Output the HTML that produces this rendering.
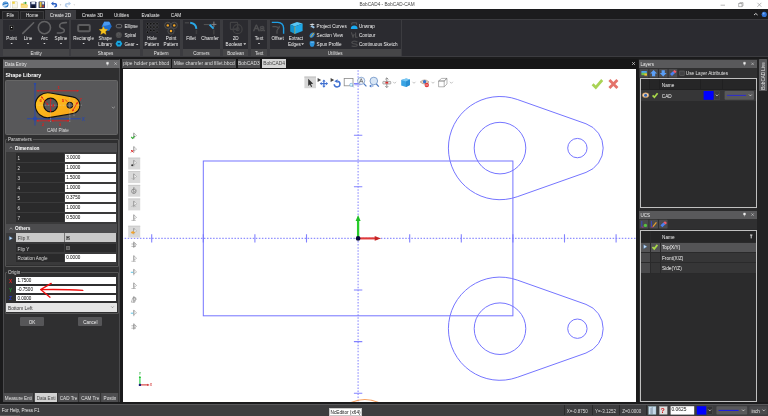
<!DOCTYPE html>
<html>
<head>
<meta charset="utf-8">
<title>BobCAD4 - BobCAD-CAM</title>
<style>
*{box-sizing:border-box;margin:0;padding:0}
html,body{width:768px;height:416px;overflow:hidden;background:#1b1b1c}
body{position:relative;font-family:"Liberation Sans",sans-serif;font-size:4.6px;color:#d6d6d6;line-height:1}
.a{position:absolute}
.t{position:absolute;white-space:nowrap;line-height:6px;height:6px;margin-top:1px}
.c{text-align:center}
svg{position:absolute;overflow:visible}
/* ribbon */
#titlebar{left:0;top:0;width:768px;height:9.3px;background:#fff}
#tabrow{left:0;top:9.3px;width:768px;height:10.3px;background:#1c1c1e}
#ribbon{left:0;top:19.4px;width:768px;height:37.4px;background:#3c3c40}
.grp{position:absolute;top:20.2px;height:35.8px;background:#2b2b30}
.grp i{position:absolute;left:0;right:0;bottom:0;height:7.2px;background:#464648;display:block}
.gl{position:absolute;top:50.6px;height:6px;line-height:6px;text-align:center;color:#e2e2e2}
.rt{position:absolute;white-space:nowrap;line-height:6px;height:6px;margin-top:1px;color:#f0f0f0;text-align:center}
.arr{position:absolute;width:3px;height:1.8px;margin-left:-.4px;margin-top:.2px;background:#dadada;clip-path:polygon(0 0,100% 0,50% 100%)}
/* panels */
.hdr{position:absolute;background:#6a6a6c;color:#e4e4e4}
.inp{position:absolute;background:#fff;color:#000;height:8px;line-height:8px;padding-left:1.2px;font-size:4.6px}
.lab{position:absolute;background:#2a2a2b;color:#ddd;height:8.6px;line-height:11.6px;overflow:hidden;padding-left:1.2px}
</style>
</head>
<body>
<div id="root" style="position:absolute;left:0;top:0;width:768px;height:416px;will-change:transform">
<!-- TITLE BAR -->
<div class="a" id="titlebar"></div>
<div class="t" style="left:359.4px;top:.6px;color:#444;font-size:4.7px">BobCAD4 - BobCAD-CAM</div>
<svg class="a" style="left:0;top:0" width="90" height="10" viewBox="0 0 90 10">
<circle cx="5.5" cy="4.6" r="3" fill="#2b79c8"/><path d="M2.8 5.4 Q5 3.2 8.2 4.2 Q6.6 6.6 3.4 7 Z" fill="#cfe3f4"/><path d="M3 3.4 Q5 1.8 7.4 2.6" stroke="#9cc6ea" stroke-width=".6" fill="none"/>
<rect x="10.3" y="1.4" width=".4" height="6.6" fill="#c8c8c8"/><rect x="12.4" y="1.8" width="5" height="6.2" fill="#f6f5ea" stroke="#c4c0a0" stroke-width=".4"/><rect x="12.2" y="1.6" width="2.6" height="2.2" fill="#f2d444"/>
<path d="M20.8 3.4 h2.4 l.7 .8 h3.4 v3.6 h-6.5 z" fill="#f0c64a"/><path d="M21.4 5 h6.8 l-1 2.8 h-6.4 z" fill="#f7dd82"/><path d="M25 1.4 l2 1.5 -2 1.4 v-.9 h-1.6 v-1 h1.6z" fill="#42a53a"/>
<rect x="30.2" y="1.8" width="6.2" height="6.2" rx=".5" fill="#1e2a52"/><rect x="31.4" y="1.8" width="3.8" height="2.4" fill="#dfe6f2"/><rect x="31.6" y="5.4" width="3.4" height="2.6" fill="#0e1326"/>
<rect x="38.6" y="1.6" width="6.4" height="6.4" rx=".5" fill="#27376a"/><rect x="39.6" y="2" width="2" height="5.4" fill="#e5c340"/><rect x="42.2" y="2" width="2" height="2.4" fill="#dfe6f2"/><rect x="42.2" y="5.2" width="2" height="2.2" fill="#b5452f"/>
<rect x="47.4" y="1.4" width=".4" height="6.6" fill="#c8c8c8"/>
<path d="M51 3.6 L53.4 1.6 V3 H55.4 Q57.4 3.2 57.2 5.4 Q57 7.6 54.4 7.4 V6 Q55.6 6 55.6 5 Q55.6 4.4 55 4.4 H53.4 V5.8 Z" fill="#2d62c4"/>
<path d="M59.6 4.4 h1.8 l-.9 1 z" fill="#9a9a9a"/>
<path d="M71 3.6 L68.6 1.6 V3 H66.6 Q64.6 3.2 64.8 5.4 Q65 7.6 67.6 7.4 V6 Q66.4 6 66.4 5 Q66.4 4.4 67 4.4 H68.6 V5.8 Z" fill="#b4cdea"/>
<path d="M73.4 4.4 h1.8 l-.9 1 z" fill="#c4c4c4"/>
</svg>
<svg class="a" style="left:715px;top:0" width="53" height="10" viewBox="0 0 53 10">
<path d="M5.6 5.2 h4.4" stroke="#8a8a8a" stroke-width=".6"/>
<rect x="23.8" y="3.4" width="3.2" height="3.4" fill="none" stroke="#8a8a8a" stroke-width=".6"/><path d="M24.8 3.4 v-.8 h3.2 v3.4 h-1" fill="none" stroke="#8a8a8a" stroke-width=".6"/>
<path d="M42.4 2.8 l4 4 M46.4 2.8 l-4 4" stroke="#8a8a8a" stroke-width=".6"/>
</svg>
<!-- TAB ROW -->
<div class="a" id="tabrow"></div>
<div class="a" style="left:1.6px;top:10.6px;width:17.6px;height:8.8px;background:#262628;border:.4px solid #3a3a3c;border-bottom:0"></div>
<div class="a" style="left:20px;top:10.6px;width:24.4px;height:8.8px;background:#262628;border:.4px solid #3a3a3c;border-bottom:0"></div>
<div class="a" style="left:45.2px;top:10.2px;width:30.4px;height:9.6px;background:#3c3c40"></div>
<div class="rt" style="left:1.6px;width:17.6px;top:12px;font-size:4.7px">File</div>
<div class="rt" style="left:20px;width:24.4px;top:12px;font-size:4.7px">Home</div>
<div class="rt" style="left:45.2px;width:30.4px;top:12px;font-size:4.7px">Create 2D</div>
<div class="rt" style="left:77px;width:31px;top:12px;font-size:4.7px">Create 3D</div>
<div class="rt" style="left:108px;width:27px;top:12px;font-size:4.7px">Utilities</div>
<div class="rt" style="left:137px;width:27px;top:12px;font-size:4.7px">Evaluate</div>
<div class="rt" style="left:166px;width:20px;top:12px;font-size:4.7px">CAM</div>
<svg class="a" style="left:748px;top:10px" width="20" height="9" viewBox="0 0 20 9"><path d="M6 5 l1.8 -1.5 1.8 1.5" fill="none" stroke="#e4e4e4" stroke-width=".9"/><circle cx="16.2" cy="4.4" r="2.6" fill="#2f73d8"/><circle cx="15.6" cy="3.6" r="1" fill="#7fb0f0"/></svg>
<!-- RIBBON -->
<div class="a" id="ribbon"></div>
<div class="grp" style="left:3px;width:66.3px"><i></i></div><div class="gl" style="left:3px;width:66.3px">Entity</div>
<div class="grp" style="left:71.4px;width:68.4px"><i></i></div><div class="gl" style="left:71.4px;width:68.4px">Shapes</div>
<div class="grp" style="left:142.6px;width:37.2px"><i></i></div><div class="gl" style="left:142.6px;width:37.2px">Pattern</div>
<div class="grp" style="left:182.6px;width:37.6px"><i></i></div><div class="gl" style="left:182.6px;width:37.6px">Corners</div>
<div class="grp" style="left:223px;width:25.3px"><i></i></div><div class="gl" style="left:223px;width:25.3px">Boolean</div>
<div class="grp" style="left:250.8px;width:16.6px"><i></i></div><div class="gl" style="left:250.8px;width:16.6px">Text</div>
<div class="grp" style="left:269.6px;width:131.2px"><i></i></div><div class="gl" style="left:269.6px;width:131.2px">Utilities</div>
<div class="grp" style="left:402.4px;width:366px"></div>
<div class="rt" style="left:-8.4px;width:40px;top:35.2px">Point</div>
<div class="arr" style="left:10.5px;top:42.4px"></div>
<div class="rt" style="left:8.0px;width:40px;top:35.2px">Line</div>
<div class="arr" style="left:26.9px;top:42.4px"></div>
<div class="rt" style="left:24.4px;width:40px;top:35.2px">Arc</div>
<div class="arr" style="left:43.3px;top:42.4px"></div>
<div class="rt" style="left:41.0px;width:40px;top:35.2px">Spline</div>
<div class="arr" style="left:59.9px;top:42.4px"></div>
<svg class="a" style="left:0;top:19px" width="410" height="38" viewBox="0 19 410 38">
<g fill="none" stroke="#626264" stroke-width="1.6" stroke-linecap="round">
<rect x="9.6" y="25.4" width="4" height="4.6" rx=".4" fill="#0c0c0c" stroke="#4a4a4c" stroke-width=".7"/>
<path d="M22.8 33.4 L33.6 22.8"/>
<circle cx="44.4" cy="27.6" r="6.1"/>
<path d="M66.4 22.6 Q59.4 22.4 59.6 26 Q59.8 28 62.4 28.6 Q65 29.4 64 31.6 Q63 33.2 57.4 33"/>
<rect x="78.2" y="24.9" width="11.6" height="6.4" rx="1" stroke-width="2" stroke="#5c5c5e" fill="#262628"/>
</g>
<circle cx="11.6" cy="27.4" r=".7" fill="#e8e8e8"/>
<!-- shape library -->
<path d="M104.2 21.8 h5 l2.6 4.4 -2.6 4.6 h-5 l-2.6 -4.6z" fill="#1e6fd0"/><path d="M104.2 21.8 h5 l1.4 2.4 q-4 2 -8 1.2z" fill="#4b9af0"/>
<path d="M103.4 26.4 l1.3 2.7 3 .4 -2.2 2.1 .6 3 -2.7 -1.5 -2.7 1.5 .6 -3 -2.2 -2.1 3 -.4z" fill="#f5c21c" stroke="#d89a10" stroke-width=".3"/>
<!-- ellipse spiral gear -->
<rect x="116.2" y="24.4" width="5.6" height="3.4" rx="1.6" fill="none" stroke="#747476" stroke-width=".9"/>
<circle cx="118.8" cy="35" r="3.1" fill="#4c4c4e"/><path d="M118.8 35 q1.4 -.2 1 -1.4 q-.8 -1.2 -2.2 -.2 q-1 1.6 .6 2.8" fill="none" stroke="#666" stroke-width=".5"/>
<path d="M117.2 40.8 h3.4 l1.7 2.9 -1.7 2.9 h-3.4 l-1.7 -2.9z" fill="#17a6e0"/><rect x="117.6" y="43" width="2.6" height="1.5" rx=".7" fill="#0b3f68"/>
<!-- hole pattern -->
<g fill="#060606" stroke="#555557" stroke-width=".6"><circle cx="147.5" cy="23.8" r="1.2"/><circle cx="147.5" cy="27.1" r="1.2"/><circle cx="150.8" cy="23.8" r="1.2"/><circle cx="150.8" cy="27.1" r="1.2"/><circle cx="153.9" cy="23.8" r="1.2"/><circle cx="153.9" cy="27.1" r="1.2"/><circle cx="157.1" cy="23.8" r="1.2"/><circle cx="157.1" cy="27.1" r="1.2"/><circle cx="147.5" cy="32.2" r="1.2"/><circle cx="150.8" cy="30.3" r="1.2"/><circle cx="153.9" cy="30.3" r="1.2"/><circle cx="157.1" cy="32.2" r="1.2"/></g>
<!-- point pattern -->
<g fill="#2c2c2e" stroke="#555557" stroke-width=".8"><circle cx="167.8" cy="25.4" r="3.2"/><circle cx="174.2" cy="25.4" r="3.2"/><circle cx="171" cy="31" r="3.2"/></g>
<g fill="#f5a623"><circle cx="167.8" cy="25.4" r="1.2"/><circle cx="174.2" cy="25.4" r="1.2"/><circle cx="171" cy="31" r="1.2"/></g>
<!-- fillet -->
<path d="M184.8 22.8 h4.2" stroke="#48484a" stroke-width="1.3" fill="none"/><path d="M190.2 22.8 Q195.8 23.4 196.4 28.8" stroke="#2aa8e6" stroke-width="1.9" fill="none" stroke-linecap="butt"/><path d="M196.4 29.8 v4.2" stroke="#3e3e40" stroke-width="1.5" fill="none"/>
<!-- chamfer -->
<path d="M203.8 24.6 h6" stroke="#555557" stroke-width="1" fill="none"/><path d="M213.8 29.4 v5" stroke="#404042" stroke-width="1.5" fill="none"/><path d="M209.6 24.6 l4 4" stroke="#2aa8e6" stroke-width="2" fill="none" stroke-linecap="butt"/><path d="M213.9 21.6 v5.4 M211.4 24.4 h5" stroke="#8a8a8c" stroke-width=".9"/>
<!-- 2d boolean -->
<g fill="none" stroke="#424244" stroke-width="1.2"><rect x="230.4" y="22.4" width="7.2" height="7" rx=".6"/><circle cx="237.6" cy="29.2" r="4.5"/><circle cx="237.6" cy="29.2" r="1.5"/><path d="M237.6 24.8 v4.4 h-4.4"/></g>
<!-- text Aa -->
<text x="253.2" y="31.4" font-family="Liberation Sans" font-size="9.4" fill="none" stroke="#4e4e50" stroke-width=".7">Aa</text>
<!-- offset -->
<path d="M271.8 22.4 h6 Q283.4 22.8 283.6 28 v5.8" fill="none" stroke="#1f9fe4" stroke-width="1.4"/>
<path d="M272.4 26.6 h3.4 q1.8 .2 2.6 1.6 M277 33.8 v-3 q.2 -1.6 1.6 -2.4 q1 -.8 .6 -2.6" fill="none" stroke="#505052" stroke-width="1.2"/>
<!-- extract edges cube -->
<path d="M290.2 24.6 L297 22 L302.6 23.6 L294.8 26.4 Z" fill="#58c6f4"/><path d="M290.2 24.6 L294.8 26.4 V34 L290.2 31.4 Z" fill="#1193cf"/><path d="M294.8 26.4 L302.6 23.6 V31 L294.8 34 Z" fill="#1ea8e8"/><path d="M294.8 26.4 V34" stroke="#e9b62c" stroke-width=".6"/>
<!-- small util icons -->
<path d="M309.4 24.4 l3.2 -1 2.2 1.2 -3 1z" fill="#d8d8d8"/><path d="M310.2 26.6 l3.6 2 1 -1.6 -2.6 -1.8z" fill="#9ac4e6"/><path d="M309.2 25.4 l2 3.2" stroke="#444" stroke-width=".5"/>
<path d="M309.6 36.8 q-.6 -3.2 2.8 -4.4 q2.4 0 2.4 2.2 q-1 3 -3.8 3.4z" fill="#2b86d4"/><path d="M310.6 37.2 l3.4 -4.6" stroke="#e4b52a" stroke-width=".9"/>
<path d="M309.8 41.6 q2.4 -1.2 4.8 0 q.6 3 -1 4.8 q-1.6 .8 -3.2 -.2 q-1.2 -2 -.6 -4.6z" fill="#2b93dc"/><path d="M310.6 42 q1.6 .8 3.4 0" stroke="#bfe0f6" stroke-width=".5" fill="none"/>
<path d="M350.8 28.9 Q351 25.6 354.2 25.6 Q357.4 25.6 357.6 28.9 Z" fill="#19a9f0"/><path d="M351.8 24.8 v-2 h4.8 v2" fill="none" stroke="#5a5a5c" stroke-width=".9"/>
<path d="M351.4 32.4 l1.6 4.8 1.2 -3.2 M355.6 32.4 v4.8 h2" stroke="#505052" stroke-width="1.1" fill="none"/>
<path d="M357.4 41.8 q-4.4 -1.6 -5.6 .6 q.2 1.4 2.8 1.4 q2.8 .2 2.6 1.8 q-1.6 1.6 -5.6 .2" stroke="#4a4a4c" stroke-width="1.3" fill="none"/>
</svg>
<div class="rt" style="left:63.6px;width:40px;top:35.2px">Rectangle</div>
<div class="arr" style="left:82.5px;top:42.4px"></div>
<div class="rt" style="left:85.2px;width:40px;top:35.2px">Shape</div>
<div class="rt" style="left:85.2px;width:40px;top:40.6px">Library</div>
<div class="rt" style="left:124.4px;top:23.4px;text-align:left">Ellipse</div>
<div class="rt" style="left:124.4px;top:32.2px;text-align:left">Spiral</div>
<div class="rt" style="left:124.4px;top:41px;text-align:left">Gear</div>
<div class="arr" style="left:136.1px;top:43.4px"></div>
<div class="rt" style="left:132.0px;width:40px;top:35.2px">Hole</div>
<div class="rt" style="left:132.0px;width:40px;top:40.6px">Pattern</div>
<div class="rt" style="left:151.0px;width:40px;top:35.2px">Point</div>
<div class="rt" style="left:151.0px;width:40px;top:40.6px">Pattern</div>
<div class="rt" style="left:171.0px;width:40px;top:35.2px">Fillet</div>
<div class="rt" style="left:190.0px;width:40px;top:35.2px">Chamfer</div>
<div class="rt" style="left:215.6px;width:40px;top:35.2px">2D</div>
<div class="rt" style="left:214.0px;width:40px;top:40.6px">Boolean</div>
<div class="arr" style="left:243.7px;top:43px"></div>
<div class="rt" style="left:239.0px;width:40px;top:35.2px">Text</div>
<div class="arr" style="left:257.9px;top:42.4px"></div>
<div class="rt" style="left:257.6px;width:40px;top:35.2px">Offset</div>
<div class="rt" style="left:276.0px;width:40px;top:35.2px">Extract</div>
<div class="rt" style="left:274.4px;width:40px;top:40.6px">Edges</div>
<div class="arr" style="left:301.5px;top:43px"></div>
<div class="rt" style="left:316.6px;top:23.4px;text-align:left">Project Curves</div>
<div class="rt" style="left:316.6px;top:32.2px;text-align:left">Section View</div>
<div class="rt" style="left:316.6px;top:41px;text-align:left">Spun Profile</div>
<div class="rt" style="left:359px;top:23.4px;text-align:left">Unwrap</div>
<div class="rt" style="left:359px;top:32.2px;text-align:left">Contour</div>
<div class="rt" style="left:359px;top:41px;text-align:left">Continuous Sketch</div>

<!-- LEFT PANEL -->
<div class="a" style="left:2.6px;top:59.4px;width:117.4px;height:342.8px;background:#2f2f30;border-left:.6px solid #4a4a4c;border-right:.6px solid #4a4a4c"></div>
<div class="hdr" style="left:3px;top:59.6px;width:116.6px;height:8.4px"></div>
<div class="t" style="left:4.8px;top:61px;color:#e6e6e6;font-size:4.6px">Data Entry</div>
<svg class="a" style="left:104px;top:60px" width="16" height="8" viewBox="0 0 16 8"><path d="M2.6 2.2 h1.8 v2 h-1.8z M3.5 4.2 v1.4" fill="#eee" stroke="#eee" stroke-width=".4"/><path d="M10.4 2.4 l2.4 2.4 M12.8 2.4 l-2.4 2.4" stroke="#ddd" stroke-width=".5"/></svg>
<div class="t" style="left:5.4px;top:71px;color:#fff;font-weight:bold;font-size:5.4px">Shape Library</div>
<div class="a" style="left:5px;top:80px;width:112.6px;height:54.8px;background:#58585a;border-radius:1.4px;border:.4px solid #666"></div>
<div class="t c" style="left:5px;width:105.8px;top:127.2px;color:#dedede">CAM Plate</div>
<svg class="a" style="left:0;top:78px" width="122" height="50" viewBox="0 78 122 50">
<defs><linearGradient id="yg" x1="0" y1="0" x2="1" y2="1"><stop offset="0" stop-color="#ffc61e"/><stop offset="1" stop-color="#f7a117"/></linearGradient></defs>
<path d="M35 83.4 V125.6" stroke="#2a48a8" stroke-width="1.1"/><path d="M33.6 83 h2.8 l-1.4 2.8z" fill="#2a48a8"/>
<path d="M27 118.7 H80.6" stroke="#2a48a8" stroke-width="1.1"/><circle cx="35" cy="118.7" r="2.1" fill="#2a48a8"/>
<text x="81.8" y="120.5" font-size="4.8" font-weight="bold" fill="#2a48a8" font-family="Liberation Sans">X</text>
<path d="M50.4 93 L72.6 96.9 A8.4 8.4 0 0 1 73 113.5 L50.6 117.4 A12.5 12.5 0 1 1 50.4 93 Z" fill="url(#yg)" stroke="#111" stroke-width="1.1" stroke-linejoin="round"/>
<circle cx="50.6" cy="105" r="6.9" fill="#58585a" stroke="#111" stroke-width="1.1"/>
<circle cx="69.8" cy="105.2" r="3" fill="#58585a" stroke="#111" stroke-width="1"/>
<g stroke="#d8d8d8" stroke-width=".4" stroke-dasharray=".9 .6" fill="none"><path d="M37.6 105.2 H82"/><path d="M50.6 112 V122"/><path d="M69.8 97 V122"/><path d="M74 100 V116.6"/></g>
<g stroke="#e31b1b" stroke-width=".75" fill="none"><path d="M37.4 90.8 H78.4"/><path d="M37 120.8 H50 M52 120.8 H69"/><path d="M41.4 96.8 l6.6 8"/><path d="M72.6 111 l4.8 -8.6"/><path d="M50.6 99 v12.6"/><path d="M65.4 99.6 l1.8 2.2"/></g>
<g fill="#e31b1b"><path d="M36.4 90.8 l2.2 -1 v2z M79 90.8 l-2.2 -1 v2z M36.2 120.8 l2.2 -1 v2z M50.6 120.8 l-2.2 -1 v2z M51.2 120.8 l2.2 -1 v2z M69.6 120.8 l-2.2 -1 v2z M50.6 98.2 l-1 2.2 h2z M50.6 112.2 l-1 -2.2 h2z M41 96.2 l2.2 1 -1.5 1.3z M48.4 105.2 l-2.2 -1 1.5 -1.3z M77.8 101.8 l-.3 2.4 -1.7 -1z M72.2 111.6 l.3 -2.4 1.7 1z"/></g>
<g font-size="4.3" font-weight="bold" fill="#e31b1b" font-family="Liberation Sans"><text x="57.6" y="88.6">1</text><text x="41.8" y="125.8">2</text><text x="58.8" y="125.8">3</text><text x="52" y="106.6">4</text><text x="61.8" y="102.2">5</text><text x="39.6" y="102.2">6</text><text x="79.6" y="101.2">7</text></g>
<path d="M112 106.8 l1.4 1.4 1.4 -1.4" fill="none" stroke="#bbb" stroke-width=".7"/>
</svg>
<div class="a" style="left:4.6px;top:139.2px;width:114px;height:127.4px;border:.5px solid #555;border-radius:1px"></div>
<div class="t" style="left:7px;top:136.2px;background:#2f2f30;padding:0 1px;color:#ddd">Parameters</div>
<div class="a" style="left:6px;top:142.6px;width:111px;height:122.6px;background:#3a3a3b"></div>
<div class="a" style="left:6px;top:142.6px;width:111px;height:9.8px;background:#4c4c4e"></div>
<div class="t" style="left:15px;top:144.6px;color:#fff;font-weight:bold;font-size:4.8px">Dimension</div>
<svg class="a" style="left:8.6px;top:146px" width="4" height="3" viewBox="0 0 4 3"><path d="M.6 2.4 l1.4 -1.6 1.4 1.6" fill="none" stroke="#bbb" stroke-width=".6"/></svg>
<div class="lab" style="left:16.4px;top:153.4px;width:48px">1</div><div class="inp" style="left:65px;top:153.6px;width:51.2px">3.0000</div>
<div class="lab" style="left:16.4px;top:163.4px;width:48px">2</div><div class="inp" style="left:65px;top:163.6px;width:51.2px">1.0000</div>
<div class="lab" style="left:16.4px;top:173.4px;width:48px">3</div><div class="inp" style="left:65px;top:173.6px;width:51.2px">1.5000</div>
<div class="lab" style="left:16.4px;top:183.4px;width:48px">4</div><div class="inp" style="left:65px;top:183.6px;width:51.2px">1.0000</div>
<div class="lab" style="left:16.4px;top:193.4px;width:48px">5</div><div class="inp" style="left:65px;top:193.6px;width:51.2px">0.3750</div>
<div class="lab" style="left:16.4px;top:203.4px;width:48px">6</div><div class="inp" style="left:65px;top:203.6px;width:51.2px">1.0000</div>
<div class="lab" style="left:16.4px;top:213.4px;width:48px">7</div><div class="inp" style="left:65px;top:213.6px;width:51.2px">0.5000</div>
<div class="a" style="left:6px;top:224.4px;width:111px;height:8.2px;background:#4c4c4e"></div>
<div class="t" style="left:15px;top:224.6px;color:#fff;font-weight:bold;font-size:4.8px">Others</div>
<svg class="a" style="left:8.6px;top:226.6px" width="4" height="3" viewBox="0 0 4 3"><path d="M.6 2.4 l1.4 -1.6 1.4 1.6" fill="none" stroke="#bbb" stroke-width=".6"/></svg>
<div class="a" style="left:16.4px;top:233.4px;width:99.8px;height:9px;background:#c9c9c9"></div><div class="a" style="left:64.2px;top:233.4px;width:.5px;height:9px;background:#777"></div>
<div class="t" style="left:17.8px;top:235.2px;color:#3c3c3c">Flip X</div>
<div class="a" style="left:66px;top:235.6px;width:4.4px;height:4.4px;background:#3a3a3a;border:.4px solid #777"></div><svg class="a" style="left:66px;top:235.6px" width="4.4" height="4.4" viewBox="0 0 4.4 4.4"><path d="M1 2.2 l.9 1 1.6 -2" fill="none" stroke="#eee" stroke-width=".6"/></svg>
<svg class="a" style="left:8.8px;top:235.8px" width="4" height="4.4" viewBox="0 0 4 4.4"><path d="M.4 .4 l3 1.8 -3 1.8z" fill="#d6e8fb" stroke="#4b8fd8" stroke-width=".4"/></svg>
<div class="lab" style="left:16.4px;top:243.6px;width:48px;height:8.8px">Flip Y</div><div class="a" style="left:65px;top:243.6px;width:51.2px;height:8.8px;background:#2a2a2b"></div>
<div class="a" style="left:66px;top:245.8px;width:4.4px;height:4.4px;background:#555;border:.4px solid #6a6a6a"></div>
<div class="lab" style="left:16.4px;top:253.6px;width:48px;line-height:9.6px">Rotation Angle</div><div class="inp" style="left:65px;top:253.8px;width:51.2px">0.0000</div>
<div class="a" style="left:4.6px;top:272.4px;width:114px;height:41.4px;border:.5px solid #555;border-radius:1px"></div>
<div class="t" style="left:7px;top:269.4px;background:#2f2f30;padding:0 1px;color:#ddd">Origin</div>
<div class="t" style="left:9px;top:278.0px;color:#d82020;font-weight:bold;font-size:4.8px">X</div><div class="inp" style="left:16.2px;top:277.2px;width:100.2px;height:6.8px;line-height:8.8px;overflow:hidden">1.7500</div>
<div class="t" style="left:9px;top:286.6px;color:#1d8f2a;font-weight:bold;font-size:4.8px">Y</div><div class="inp" style="left:16.2px;top:285.8px;width:100.2px;height:6.8px;line-height:8.8px;overflow:hidden">-0.7500</div>
<div class="t" style="left:9px;top:295.4px;color:#2233cc;font-weight:bold;font-size:4.8px">Z</div><div class="inp" style="left:16.2px;top:294.6px;width:100.2px;height:6.8px;line-height:8.8px;overflow:hidden">0.0000</div>
<div class="a" style="left:6px;top:303.2px;width:110.6px;height:8.6px;background:#e4e4e4;border-radius:.6px"></div><div class="t" style="left:8px;top:304.6px;color:#333;font-size:4.8px">Bottom Left</div>
<svg class="a" style="left:111.4px;top:306.4px" width="3" height="2.4" viewBox="0 0 3 2.4"><path d="M.3 .5 l1.2 1.2 1.2 -1.2" fill="none" stroke="#555" stroke-width=".5"/></svg>
<svg class="a" style="left:0;top:280px" width="122" height="22" viewBox="0 280 122 22"><path d="M82.8 290.4 Q66 289.2 41.4 289.6" fill="none" stroke="#f01010" stroke-width="1.35" stroke-linecap="round"/><path d="M51.2 283.4 L40.6 289.6 L50 297.2" fill="none" stroke="#f01010" stroke-width="1.35" stroke-linecap="round" stroke-linejoin="round"/></svg>
<div class="a c" style="left:20.1px;top:317.4px;width:24px;height:8.8px;background:#565658;border-radius:1px;line-height:12.8px;overflow:hidden;color:#eee">OK</div>
<div class="a c" style="left:78.2px;top:317.4px;width:24.2px;height:8.8px;background:#565658;border-radius:1px;line-height:12.8px;overflow:hidden;color:#eee">Cancel</div>
<div class="a" style="left:3.4px;top:393.4px;width:115.6px;height:8.4px;background:#4a4a4c"></div>
<div class="a c" style="left:3.4px;top:393.4px;width:31px;height:8.4px;background:#4e4e50;color:#e2e2e2;line-height:12.6px;border-right:.4px solid #333;overflow:hidden">Measure Enti</div>
<div class="a c" style="left:35px;top:393.4px;width:23.2px;height:8.4px;background:#d2d2d2;color:#444;line-height:12.6px;border-right:.4px solid #333;overflow:hidden">Data Enti</div>
<div class="a c" style="left:58.8px;top:393.4px;width:20.6px;height:8.4px;background:#4e4e50;color:#e2e2e2;line-height:12.6px;border-right:.4px solid #333;overflow:hidden">CAD Tre</div>
<div class="a c" style="left:80px;top:393.4px;width:21.4px;height:8.4px;background:#4e4e50;color:#e2e2e2;line-height:12.6px;border-right:.4px solid #333;overflow:hidden">CAM Tre</div>
<div class="a c" style="left:102px;top:393.4px;width:17px;height:8.4px;background:#4e4e50;color:#e2e2e2;line-height:12.6px;border-right:.4px solid #333;overflow:hidden">Postin</div>

<!-- CANVAS -->
<div class="a" style="left:120.4px;top:58.6px;width:518px;height:10.6px;background:#161617"></div>
<div class="a c" style="left:122.6px;top:59.4px;width:49.4px;height:9px;margin-left:-1px;background:#4c4c4e;color:#dcdcdc;line-height:9.6px;font-size:4.9px">pipe holder part.bbcd</div>
<div class="a c" style="left:172.4px;top:59.4px;width:63.6px;height:9px;background:#4c4c4e;color:#dcdcdc;line-height:9.6px;font-size:4.9px">Mike chamfer and fillet.bbcd</div>
<div class="a c" style="left:237.6px;top:59.4px;width:22.6px;height:9px;background:#4c4c4e;color:#dcdcdc;line-height:9.6px;font-size:4.9px">BobCAD3</div>
<div class="a c" style="left:261.8px;top:59.4px;width:24.6px;height:9px;background:#d4d4d4;color:#444;line-height:9.6px;font-size:4.9px">BobCAD4</div>
<svg class="a" style="left:629.6px;top:60.4px" width="8" height="8" viewBox="0 0 8 8"><path d="M2 2 l3 3 M5 2 l-3 3" stroke="#e8e8e8" stroke-width=".6"/></svg>
<div class="a" style="left:122.6px;top:69px;width:513.8px;height:332.8px;background:#fff"></div>
<svg class="a" style="left:122.6px;top:69px;overflow:hidden" width="513.8" height="332.8" viewBox="122.6 69 513.8 332.8">
<g stroke="#7474ff" stroke-width="1" fill="none">
<path d="M121.2 238.4 H636.4" stroke="#9090ff" stroke-dasharray="1.5 1.55" stroke-width="1.15"/><path d="M357.7 67.2 V402.2" stroke="#9090ff" stroke-dasharray="1.5 1.55" stroke-width="1.15"/>
<path d="M151.3 234.20000000000002 V242.6 M202.9 234.20000000000002 V242.6 M254.5 234.20000000000002 V242.6 M306.1 234.20000000000002 V242.6 M409.3 234.20000000000002 V242.6 M460.9 234.20000000000002 V242.6 M512.5 234.20000000000002 V242.6 M564.1 234.20000000000002 V242.6 M615.7 234.20000000000002 V242.6 M353.5 83.6 H361.9 M353.5 135.2 H361.9 M353.5 186.8 H361.9 M353.5 290.0 H361.9 M353.5 341.6 H361.9 M353.5 393.2 H361.9 " stroke="#8282ff" stroke-width="1.1"/>
<rect x="202.9" y="161.0" width="309.6" height="154.8"/>
<path d="M516.80 99.45 L585.60 123.78 A25.80 25.80 0 0 1 585.60 172.42 L516.80 196.75 A51.60 51.60 0 1 1 516.80 99.45Z"/><circle cx="499.60" cy="148.10" r="25.80"/><circle cx="577.00" cy="148.10" r="9.68"/>
<path d="M516.80 280.05 L585.60 304.38 A25.80 25.80 0 0 1 585.60 353.02 L516.80 377.35 A51.60 51.60 0 1 1 516.80 280.05Z"/><circle cx="499.60" cy="328.70" r="25.80"/><circle cx="577.00" cy="328.70" r="9.68"/>
</g>
<path d="M357.7 238.4 V219.4" stroke="#27cc2a" stroke-width="2.3"/><path d="M355.2 221.0 l2.5 -6 2.5 6z" fill="#1fbf24"/>
<path d="M357.7 238.4 H375.7" stroke="#e03a3a" stroke-width="2.1"/><path d="M374.3 236.1 l6.4 2.3 -6.4 2.3z" fill="#c62424"/>
<circle cx="357.7" cy="238.4" r="2.3" fill="#07073a"/>
<g transform="translate(-.9 -.7)"><path d="M140.4 385.6 V377.4" stroke="#3fd65a" stroke-width="1.3"/><path d="M139.3 378.8 l1.1 -2.4 1.1 2.4z" fill="#19c22a"/><path d="M140.4 385.6 H148.4" stroke="#d02626" stroke-width="1"/><path d="M147.8 384.5 l2.4 1.1 -2.4 1.1z" fill="#d02626"/><circle cx="140.4" cy="385.6" r="1.2" fill="#1a1a7a"/>
<text x="139.4" y="375.6" font-size="2.8" fill="#19a22a" font-family="Liberation Sans" font-weight="bold">Y</text><text x="150.6" y="386.6" font-size="2.8" fill="#d02626" font-family="Liberation Sans" font-weight="bold">X</text></g>
<path d="M350.6 402.6 Q364.4 396.4 378.4 402.6" fill="none" stroke="#f7a060" stroke-width="1.2"/>
<path d="M592.2 84.2 l3.2 3.2 6.4 -7.4" fill="none" stroke="#a9d355" stroke-width="2.7" stroke-linecap="butt" stroke-linejoin="miter"/>
<path d="M609 80 l8 8 M617 80 l-8 8" fill="none" stroke="#e4726a" stroke-width="2.8" stroke-linecap="butt"/>
</svg>
<svg class="a" style="left:122.6px;top:67.6px" width="513.8" height="334.6" viewBox="122.6 67.6 513.8 334.6">
<rect x="304" y="76.2" width="11.6" height="11.6" fill="#d6d6d6"/><rect x="304" y="76.2" width="11.6" height=".9" fill="#bdbdbd"/>
<path d="M307.8 78.4 v7.2 l1.7 -1.6 1.2 2.6 1 -.5 -1.2 -2.5 2.3 -.2z" fill="#333"/>
<path d="M317.2 77.6 v4 l3.6 -2z" fill="#444"/><path d="M320.6 83.2 h5.8 M323.5 80.3 v5.8" stroke="#3f6fd0" stroke-width="1.2" fill="none"/><path d="M323.5 79 l1.7 2 h-3.4z M323.5 87.4 l1.7 -2 h-3.4z M319.3 83.2 l2 -1.7 v3.4z M327.7 83.2 l-2 -1.7 v3.4z" fill="#3f6fd0"/>
<path d="M330.2 77.6 v4 l3.6 -2z" fill="#444"/><path d="M337.2 80.75 A2.9 2.9 0 1 1 333.8 83.85" fill="none" stroke="#3f6fd0" stroke-width="1.5"/><path d="M337.2 78.8 L333.9 80.8 L337.2 82.6 Z" fill="#3f6fd0"/>
<rect x="343.8" y="78" width="8.8" height="7.4" fill="#fff" stroke="#8a8a8a" stroke-width=".8"/><circle cx="350.8" cy="84.4" r="1.5" fill="#dff" stroke="#5a8fd0" stroke-width=".5"/><path d="M351.9 85.5 l1.4 1.4" stroke="#5a8fd0" stroke-width=".8"/>
<circle cx="360.8" cy="80.4" r="3.6" fill="#eef4fb" stroke="#6a8fc4" stroke-width=".7"/><path d="M359 82.4 l1.8 -4.2 1.8 4.2 M359.6 81.2 h2.4" fill="none" stroke="#444" stroke-width=".6"/><path d="M363.4 83.2 l2.6 2.8" stroke="#4a78c0" stroke-width="1.1"/><path d="M354 84.4 h6" stroke="#6a6aee" stroke-width=".6"/>
<circle cx="373.4" cy="80.6" r="3.8" fill="#d9e7f6" stroke="#6a8fc4" stroke-width=".8"/><path d="M376 83.6 l2.4 2.6" stroke="#4a78c0" stroke-width="1.2"/><path d="M369.4 85.6 h3.6 M369.4 85.6 l1.4 -1.2 M369.4 85.6 l1.4 1.2" stroke="#2f66c0" stroke-width=".8" fill="none"/>
<path d="M386.4 77.6 v9.4 M384.8 79 l1.6 -1.6 1.6 1.6 M384.8 85.6 l1.6 1.6 1.6 -1.6" stroke="#555" stroke-width=".6" fill="none"/><rect x="382.4" y="81" width="8" height="2.6" rx=".6" fill="#e9e9e9" stroke="#666" stroke-width=".5"/><rect x="385" y="81.4" width="2.8" height="1.8" fill="#d83030"/>
<path d="M392.7 81.4 l1.5 1.5 1.5 -1.5" stroke="#9a9a9a" stroke-width=".6" fill="none"/>
<path d="M400.8 79.6 l5 -1.6 3.8 1.2 v5.4 l-4 2 -4.8 -1.4z" fill="#3aa4e4"/><path d="M400.8 79.6 l5 -1.6 3.8 1.2 -4 1.8z" fill="#7cc8f2"/><path d="M405.6 81 v5.6 l4 -2 v-5.4z" fill="#2a8fd2"/>
<path d="M412.1 81.4 l1.5 1.5 1.5 -1.5" stroke="#9a9a9a" stroke-width=".6" fill="none"/>
<path d="M419.8 81.6 q4.4 -4.2 8.8 0 q-4.4 4 -8.8 0z" fill="#f1d9c2" stroke="#8a6a50" stroke-width=".5"/><circle cx="424.2" cy="81.4" r="1.7" fill="#3a74c8"/><circle cx="426.4" cy="84.6" r="2.2" fill="#e03a3a"/><path d="M425 84.6 h2.8" stroke="#fff" stroke-width=".6"/>
<path d="M431.1 81.4 l1.5 1.5 1.5 -1.5" stroke="#9a9a9a" stroke-width=".6" fill="none"/>
<path d="M438.2 80.6 l3 -2.6 h5.4 l-2.8 2.6z M438.2 80.6 h5.6 v5.8 h-5.6z M443.8 80.6 l2.8 -2.6 v5.6 l-2.8 2.8" fill="#fff" stroke="#777" stroke-width=".55" stroke-linejoin="round"/>
<path d="M449.5 81.4 l1.5 1.5 1.5 -1.5" stroke="#9a9a9a" stroke-width=".6" fill="none"/>
<path d="M133.4 132.6 l2.8 2.6 -2.8 2z" fill="#fff" stroke="#8a8a8a" stroke-width=".5"/><path d="M133.4 132.4 v6.2" stroke="#777" stroke-width=".55"/>
<path d="M130.8 136.6 l1.3 1.4 2.2 -2.4" stroke="#35b035" stroke-width="1.1" fill="none"/>
<path d="M133.4 146.2 l2.8 2.6 -2.8 2z" fill="#fff" stroke="#8a8a8a" stroke-width=".5"/><path d="M133.4 146.0 v6.2" stroke="#777" stroke-width=".55"/>
<path d="M130.6 149.6 l2.4 2.4 M133 149.6 l-2.4 2.4" stroke="#e03030" stroke-width=".95" fill="none"/>
<rect x="127.8" y="157.3" width="12" height="11.8" fill="#d9d9d9"/><rect x="127.8" y="157.3" width="12" height=".7" fill="#c2c2c2"/>
<path d="M133.4 159.9 l2.8 2.6 -2.8 2z" fill="#fff" stroke="#8a8a8a" stroke-width=".5"/><path d="M133.4 159.7 v6.2" stroke="#777" stroke-width=".55"/>
<circle cx="131.8" cy="164.9" r="1" fill="#333"/>
<rect x="127.8" y="170.9" width="12" height="11.8" fill="#d9d9d9"/><rect x="127.8" y="170.9" width="12" height=".7" fill="#c2c2c2"/>
<path d="M133.4 173.5 l2.8 2.6 -2.8 2z" fill="#fff" stroke="#8a8a8a" stroke-width=".5"/><path d="M133.4 173.3 v6.2" stroke="#777" stroke-width=".55"/>
<path d="M131 177.9 l2.4 1.2" stroke="#999" stroke-width=".5"/>
<rect x="127.8" y="184.5" width="12" height="11.8" fill="#d9d9d9"/><rect x="127.8" y="184.5" width="12" height=".7" fill="#c2c2c2"/>
<path d="M133.4 187.1 l2.8 2.6 -2.8 2z" fill="#fff" stroke="#8a8a8a" stroke-width=".5"/><path d="M133.4 186.9 v6.2" stroke="#777" stroke-width=".55"/>
<circle cx="133.4" cy="190.9" r="2.2" fill="none" stroke="#666" stroke-width=".6"/>
<rect x="127.8" y="198.2" width="12" height="11.8" fill="#d9d9d9"/><rect x="127.8" y="198.2" width="12" height=".7" fill="#c2c2c2"/>
<path d="M133.4 200.8 l2.8 2.6 -2.8 2z" fill="#fff" stroke="#8a8a8a" stroke-width=".5"/><path d="M133.4 200.6 v6.2" stroke="#777" stroke-width=".55"/>
<path d="M131 206.2 l2.4 -1.2 2.4 1.2" stroke="#999" stroke-width=".5" fill="none"/>
<path d="M133.4 214.4 l2.8 2.6 -2.8 2z" fill="#fff" stroke="#8a8a8a" stroke-width=".5"/><path d="M133.4 214.2 v6.2" stroke="#777" stroke-width=".55"/>
<path d="M131 220.0 h4.4" stroke="#888" stroke-width=".5"/>
<rect x="127.8" y="225.4" width="12" height="11.8" fill="#d9d9d9"/><rect x="127.8" y="225.4" width="12" height=".7" fill="#c2c2c2"/>
<path d="M133.4 228.0 l2.8 2.6 -2.8 2z" fill="#fff" stroke="#8a8a8a" stroke-width=".5"/><path d="M133.4 227.8 v6.2" stroke="#777" stroke-width=".55"/>
<path d="M130.4 232.2 q2 -2.8 4.2 0 q-2.2 2.4 -4.2 0z" fill="#f2a22c"/>
<path d="M133.4 241.6 l2.8 2.6 -2.8 2z" fill="#fff" stroke="#8a8a8a" stroke-width=".5"/><path d="M133.4 241.4 v6.2" stroke="#777" stroke-width=".55"/>
<path d="M131 243.6 h4.6 M131 246.0 h4.6" stroke="#777" stroke-width=".5"/>
<path d="M133.4 255.3 l2.8 2.6 -2.8 2z" fill="#fff" stroke="#8a8a8a" stroke-width=".5"/><path d="M133.4 255.1 v6.2" stroke="#777" stroke-width=".55"/>
<path d="M131 260.9 h4.4" stroke="#888" stroke-width=".5"/>
<path d="M133.4 268.9 l2.8 2.6 -2.8 2z" fill="#fff" stroke="#8a8a8a" stroke-width=".5"/><path d="M133.4 268.7 v6.2" stroke="#777" stroke-width=".55"/>
<path d="M130.4 271.9 h2.4" stroke="#35b6e0" stroke-width=".8"/>
<path d="M133.4 282.5 l2.8 2.6 -2.8 2z" fill="#fff" stroke="#8a8a8a" stroke-width=".5"/><path d="M133.4 282.3 v6.2" stroke="#777" stroke-width=".55"/>
<path d="M131 288.1 h4.4" stroke="#888" stroke-width=".5"/>
<path d="M133.4 296.2 l2.8 2.6 -2.8 2z" fill="#fff" stroke="#8a8a8a" stroke-width=".5"/><path d="M133.4 296.0 v6.2" stroke="#777" stroke-width=".55"/>
<path d="M131 301.8 l1.4 -4.4 h3 l-1 4.4z" fill="none" stroke="#777" stroke-width=".5"/>
<path d="M133.4 309.8 l2.8 2.6 -2.8 2z" fill="#fff" stroke="#8a8a8a" stroke-width=".5"/><path d="M133.4 309.6 v6.2" stroke="#777" stroke-width=".55"/>
<path d="M130.4 312.8 h2.4" stroke="#35b6e0" stroke-width=".8"/>
<path d="M133.4 323.4 l2.8 2.6 -2.8 2z" fill="#fff" stroke="#8a8a8a" stroke-width=".5"/><path d="M133.4 323.2 v6.2" stroke="#777" stroke-width=".55"/>
<path d="M131 325.4 h4.6 M131 327.8 h4.6" stroke="#777" stroke-width=".5"/>
</svg>

<!-- RIGHT PANELS -->
<div class="a" style="left:638.8px;top:59.4px;width:118.4px;height:342.8px;background:#2b2b2c"></div>
<div class="hdr" style="left:638.8px;top:59.6px;width:118.2px;height:8.8px;background:#59595b"></div><div class="t" style="left:640.4px;top:61.2px;color:#eee;font-size:4.5px">Layers</div>
<svg class="a" style="left:740px;top:60px" width="18" height="8" viewBox="0 0 18 8"><path d="M3.6 2.2 h1.8 v2 h-1.8z M4.5 4.2 v1.4" fill="#eee" stroke="#eee" stroke-width=".4"/><path d="M11.4 2.6 l2.4 2.4 M13.8 2.6 l-2.4 2.4" stroke="#ddd" stroke-width=".5"/></svg>
<div class="a" style="left:638.8px;top:68.4px;width:118.2px;height:9.4px;background:#303031"></div>
<svg class="a" style="left:638px;top:68px" width="120" height="10" viewBox="638 68 120 10">
<g fill="#4b4b4d"><rect x="639.8" y="69" width="8.6" height="8.4" rx=".6"/><rect x="649.4" y="69" width="8.6" height="8.4" rx=".6"/><rect x="659" y="69" width="8.6" height="8.4" rx=".6"/><rect x="668.6" y="69" width="8.6" height="8.4" rx=".6"/></g>
<rect x="641.4" y="71" width="5.4" height="2.2" fill="#4aa0e6"/><rect x="641.4" y="72.8" width="5.4" height="2.4" fill="#6fc04a"/><rect x="644.4" y="73.6" width="2.6" height="2" fill="#f0c030"/>
<path d="M653.6 70 l3.4 3.4 h-1.8 v2.8 h-3.2 v-2.8 h-1.8z" fill="#5a9ef6"/><path d="M663.2 76.4 l3.4 -3.4 h-1.8 v-2.8 h-3.2 v2.8 h-1.8z" fill="#5a9ef6"/>
<path d="M670 74 l3 -2.8 2 1.8 -3 3z" fill="#4a7ff0"/><path d="M673 71.2 l1.6 -1.2 2 1.8 -1.6 1.4z" fill="#f05a6a"/>
<rect x="679.8" y="71" width="4.4" height="4.4" fill="#414143" stroke="#6c6c6e" stroke-width=".5"/>
</svg>
<div class="t" style="left:685.8px;top:70.4px;color:#e4e4e4;font-size:4.7px">Use Layer Attributes</div>
<div class="a" style="left:639.6px;top:78.2px;width:117px;height:129.4px;border:.7px solid #c0c0c0;background:#2b2b2c"></div>
<div class="a" style="left:640.6px;top:79.2px;width:115px;height:10.4px;background:#262627"></div>
<div class="a" style="left:648.6px;top:79.2px;width:1.3px;height:21.4px;background:#202021"></div>
<div class="a" style="left:659.0px;top:79.2px;width:1.3px;height:21.4px;background:#202021"></div>
<div class="a" style="left:700.0px;top:79.2px;width:1.3px;height:21.4px;background:#202021"></div>
<div class="a" style="left:722.0px;top:79.2px;width:1.3px;height:21.4px;background:#202021"></div>
<div class="a" style="left:640.6px;top:89.4px;width:115px;height:.9px;background:#202021"></div>
<div class="t" style="left:661.8px;top:82px;color:#f2f2f2;font-size:4.7px">Name</div>
<div class="a" style="left:640.6px;top:90.2px;width:115px;height:10.4px;background:#363637"></div><div class="t" style="left:661.8px;top:92.8px;color:#f2f2f2;font-size:4.7px">CAD</div>
<svg class="a" style="left:638px;top:89px" width="120" height="13" viewBox="638 89 120 13">
<ellipse cx="645.6" cy="95.2" rx="3.2" ry="2.4" fill="#f3d3ae" stroke="#c48a4a" stroke-width=".6"/><circle cx="645.6" cy="95.2" r="1.5" fill="#2f63b0"/>
<path d="M652.6 95.4 l1.8 1.9 3.2 -4" fill="none" stroke="#a8d84a" stroke-width="1.7" stroke-linecap="butt" stroke-linejoin="miter"/>
<rect x="703.6" y="91" width="10" height="8.8" fill="#0000ff"/><rect x="714.2" y="91" width="5.6" height="8.8" fill="#3c3c3e" stroke="#555" stroke-width=".4"/><path d="M715.7 94.6 l1.3 1.3 1.3 -1.3" fill="none" stroke="#e8e8e8" stroke-width=".7"/>
<rect x="724.6" y="91" width="29.4" height="8.8" rx=".8" fill="#59595b"/><path d="M727 95.4 h19" stroke="#2020f0" stroke-width=".8"/><path d="M749.1 94.6 l1.3 1.3 1.3 -1.3" fill="none" stroke="#e8e8e8" stroke-width=".7"/>
</svg>
<div class="a" style="left:757.4px;top:58.6px;width:10.6px;height:343.6px;background:#232324"></div>
<div class="a" style="left:759px;top:59.2px;width:7.7px;height:31.5px;background:#59595b;border-radius:.6px"></div>
<div class="t" style="left:749.2px;top:72px;width:29px;text-align:center;transform:rotate(-90deg);color:#e4e4e4;font-size:4.6px">BobCAD Live</div>
<div class="hdr" style="left:638.8px;top:210.6px;width:118.2px;height:8.4px;background:#59595b"></div><div class="t" style="left:640.4px;top:212px;color:#eee;font-size:4.5px">UCS</div>
<svg class="a" style="left:740px;top:211px" width="18" height="8" viewBox="0 0 18 8"><path d="M3.6 2 h1.8 v2 h-1.8z M4.5 4 v1.4" fill="#eee" stroke="#eee" stroke-width=".4"/><path d="M11.4 2.4 l2.4 2.4 M13.8 2.4 l-2.4 2.4" stroke="#ddd" stroke-width=".5"/></svg>
<div class="a" style="left:638.8px;top:219px;width:118.2px;height:10.4px;background:#303031"></div>
<svg class="a" style="left:638px;top:219px" width="120" height="11" viewBox="638 219 120 11">
<g fill="#4b4b4d"><rect x="639.8" y="219.8" width="8.6" height="8.6" rx=".6"/><rect x="649.4" y="219.8" width="8.6" height="8.6" rx=".6"/><rect x="659" y="219.8" width="8.6" height="8.6" rx=".6"/></g>
<path d="M641.8 221 v6 h2" stroke="#3a4adc" stroke-width=".8" fill="none"/><path d="M641.8 227 h1.6" stroke="#d83030" stroke-width=".8"/><circle cx="645.4" cy="225.4" r="1.7" fill="#58c040"/>
<path d="M651.4 221 v6 h2" stroke="#3a4adc" stroke-width=".8" fill="none"/><path d="M651.4 227 h1.6" stroke="#d83030" stroke-width=".8"/><path d="M653 226.6 l3.4 -4.2" stroke="#e8a030" stroke-width="1.2"/>
<path d="M660.4 225.2 l3 -2.8 2 1.8 -3 3z" fill="#4a7ff0"/><path d="M663.4 222.4 l1.6 -1.2 2 1.8 -1.6 1.4z" fill="#f05a6a"/>
</svg>
<div class="a" style="left:639.6px;top:230.4px;width:117px;height:171.4px;border:.7px solid #c0c0c0;background:#2b2b2c"></div>
<div class="a" style="left:640.6px;top:231.4px;width:115px;height:10.2px;background:#262627"></div><div class="t" style="left:662px;top:233.8px;color:#f2f2f2;font-size:4.7px">Name</div>
<div class="a" style="left:640.6px;top:241.8px;width:115px;height:10px;background:#545456"></div><div class="t" style="left:662px;top:244.2px;color:#f6f6f6;font-size:4.7px">Top(X/Y)</div>
<div class="a" style="left:640.6px;top:252.2px;width:115px;height:10px;background:#363637"></div><div class="t" style="left:662px;top:254.6px;color:#f2f2f2;font-size:4.7px">Front(X/Z)</div>
<div class="a" style="left:640.6px;top:262.6px;width:115px;height:10px;background:#363637"></div><div class="t" style="left:662px;top:265px;color:#f2f2f2;font-size:4.7px">Side(Y/Z)</div>
<div class="a" style="left:640.6px;top:252.4px;width:9.2px;height:9.8px;background:#48484a"></div><div class="a" style="left:640.6px;top:262.8px;width:9.2px;height:9.8px;background:#48484a"></div>
<div class="a" style="left:649.8px;top:231.4px;width:.6px;height:41.2px;background:#2a2a2b"></div>
<div class="a" style="left:660px;top:231.4px;width:.6px;height:41.2px;background:#2a2a2b"></div>
<div class="a" style="left:640.6px;top:241.6px;width:115px;height:.5px;background:#2a2a2b"></div>
<div class="a" style="left:640.6px;top:252px;width:115px;height:.5px;background:#2a2a2b"></div>
<div class="a" style="left:640.6px;top:262.4px;width:115px;height:.5px;background:#2a2a2b"></div>
<div class="a" style="left:640.6px;top:272.6px;width:115px;height:.5px;background:#2a2a2b"></div>
<svg class="a" style="left:638px;top:231px" width="120" height="22" viewBox="638 231 120 22">
<path d="M643.8 244.8 l3 1.9 -3 1.9z" fill="#d6e8fb" stroke="#4b8fd8" stroke-width=".4"/>
<path d="M652.4 247 l1.8 1.9 3.2 -4" fill="none" stroke="#a8d84a" stroke-width="1.7" stroke-linecap="butt" stroke-linejoin="miter"/>
<path d="M750 235 h2.4 M751.2 235 v3.4" stroke="#eee" stroke-width=".9"/>
</svg>

<!-- STATUS BAR -->
<div class="a" style="left:0;top:403.8px;width:768px;height:12.2px;background:#3d3d3f;border-top:.6px solid #58585a"></div>
<div class="a" style="left:0;top:402.2px;width:768px;height:1.6px;background:#1b1b1c"></div>
<div class="t" style="left:1.8px;top:407.4px;color:#e8e8e8;font-size:4.5px">For Help, Press F1</div>
<div class="a" style="left:0;top:414.6px;width:20px;height:1.4px;background:#555"></div>
<div class="a" style="left:329px;top:408.4px;width:32.8px;height:7.6px;background:#fff;border:.4px solid #c8c8c8"></div><div class="t" style="left:330.6px;top:409.4px;color:#111;font-size:4.7px">NcEditor (x64)</div>
<div class="t" style="left:566.8px;top:407.6px;color:#dcdcdc;font-size:4.5px">X=-0.8750</div>
<div class="t" style="left:595px;top:407.6px;color:#dcdcdc;font-size:4.5px">Y=-3.1252</div>
<div class="t" style="left:622.2px;top:407.6px;color:#dcdcdc;font-size:4.5px">Z=0.0000</div>
<div class="a" style="left:563.6px;top:405.2px;width:.4px;height:10px;background:#2a2a2b"></div>
<div class="a" style="left:592px;top:405.2px;width:.4px;height:10px;background:#2a2a2b"></div>
<div class="a" style="left:619.4px;top:405.2px;width:.4px;height:10px;background:#2a2a2b"></div>
<div class="a" style="left:646.4px;top:405.2px;width:.4px;height:10px;background:#2a2a2b"></div>
<svg class="a" style="left:646px;top:404px" width="122" height="12" viewBox="646 404 122 12">
<rect x="648.6" y="406.4" width="7.4" height="8" fill="#c6d9ea" stroke="#8aa" stroke-width=".4"/><path d="M652.2 407 v7 M650 409 h2 M650 411 h2 M650 413 h2" stroke="#567" stroke-width=".5"/>
<rect x="659.4" y="406.4" width="7.8" height="8" fill="#ddd" stroke="#999" stroke-width=".4"/><text x="660.6" y="413.2" font-size="7" font-weight="bold" fill="#d01818" font-family="Liberation Sans">?</text>
<rect x="670.6" y="406.2" width="23.6" height="8.4" fill="#fff"/>
<rect x="696.8" y="406.2" width="9.6" height="8.4" fill="#0000ff"/><rect x="707" y="406.2" width="5.4" height="8.4" fill="#333335" stroke="#555" stroke-width=".4"/><path d="M708.5 409.6 l1.3 1.3 1.3 -1.3" fill="none" stroke="#e8e8e8" stroke-width=".7"/>
<rect x="716.4" y="406.2" width="30.8" height="8.4" rx=".8" fill="#59595b"/><path d="M718.6 410.4 h20" stroke="#1414f4" stroke-width=".95"/><path d="M742.1 409.6 l1.3 1.3 1.3 -1.3" fill="none" stroke="#e8e8e8" stroke-width=".7"/>
<rect x="749.4" y="406.2" width="18" height="8.4" rx=".8" fill="#4a4a4c"/><path d="M762.5 409.6 l1.3 1.3 1.3 -1.3" fill="none" stroke="#e8e8e8" stroke-width=".7"/>
</svg>
<div class="t" style="left:671.4px;top:406.4px;color:#111;font-size:4.9px">0.0625</div>
<div class="t" style="left:751.4px;top:407.6px;color:#e6e6e6;font-size:4.6px">inch</div>

</div>
</body>
</html>
